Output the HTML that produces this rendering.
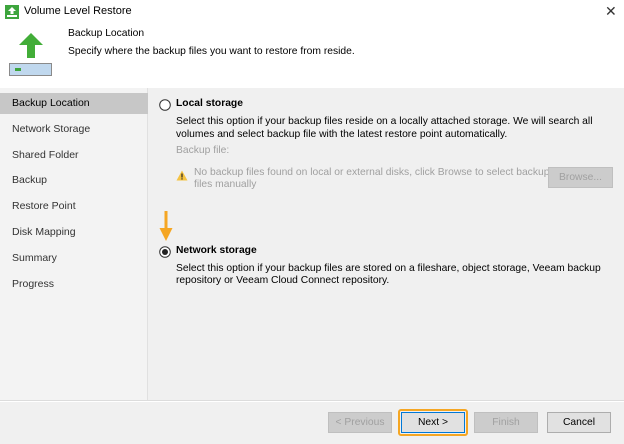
<!DOCTYPE html>
<html><head><style>
*{margin:0;padding:0;box-sizing:border-box}
body{width:624px;height:444px;position:relative;background:#f0f0f0;font-family:"Liberation Sans",sans-serif;font-size:10.3px;color:#000;overflow:hidden}
.a{position:absolute;white-space:nowrap}
.g{color:#a0a0a0}
.btn{position:absolute;height:21px;border:1px solid #adadad;background:#e1e1e1;text-align:center;line-height:19px;font-size:10.3px}
.dis{color:#a0a0a0;background:#cccccc;border-color:#bfbfbf}
.nav{position:absolute;left:12px;font-size:10.5px}
</style></head><body>
<div class="a" style="left:0;top:0;width:624px;height:88px;background:#fff"></div>
<svg class="a" style="left:5px;top:5px" width="14" height="14"><rect x="0" y="0" width="14" height="14" fill="#3da53d"/><path d="M7 2 L11 6 H8.5 V9 H5.5 V6 H3 Z" fill="#fff"/><rect x="2" y="10" width="10" height="2" fill="#fff"/></svg>
<div class="a" style="left:24px;top:5px;font-size:11px">Volume Level Restore</div>
<div class="a" style="left:605px;top:3px;font-size:14px;color:#333">✕</div>
<svg class="a" style="left:8px;top:32px" width="46" height="46"><path d="M23 1 L35 13 H27 V26 H19 V13 H11 Z" fill="#42ad38"/><rect x="1.5" y="31.5" width="42" height="12" fill="#c0d8ee" stroke="#8a8a8a"/><rect x="7" y="36" width="6" height="3" fill="#3da53d"/></svg>
<div class="a" style="left:68px;top:28px">Backup Location</div>
<div class="a" style="left:68px;top:46px">Specify where the backup files you want to restore from reside.</div>
<div class="a" style="left:0;top:88px;width:148px;height:312px;background:#f3f3f3;border-right:1px solid #e0e0e0"></div>
<div class="a" style="left:0;top:93px;width:148px;height:21px;background:#c7c7c7"></div>
<div class="nav" style="top:97px">Backup Location</div>
<div class="nav" style="top:123px;color:#333">Network Storage</div>
<div class="nav" style="top:149px;color:#333">Shared Folder</div>
<div class="nav" style="top:174px;color:#333">Backup</div>
<div class="nav" style="top:200px;color:#333">Restore Point</div>
<div class="nav" style="top:226px;color:#333">Disk Mapping</div>
<div class="nav" style="top:252px;color:#333">Summary</div>
<div class="nav" style="top:278px;color:#333">Progress</div>
<svg class="a" style="left:159px;top:99px" width="12" height="12"><circle cx="6" cy="6" r="5.3" fill="#fff" stroke="#333"/></svg>
<div class="a" style="left:176px;top:98px;font-weight:bold">Local storage</div>
<div class="a" style="left:176px;top:116px">Select this option if your backup files reside on a locally attached storage. We will search all</div>
<div class="a" style="left:176px;top:129px">volumes and select backup file with the latest restore point automatically.</div>
<div class="a g" style="left:176px;top:145px">Backup file:</div>
<svg class="a" style="left:176px;top:170px" width="12" height="11"><path d="M6 0.5 L11.5 10.5 H0.5 Z" fill="#f5c342"/><rect x="5.4" y="3.5" width="1.2" height="4" fill="#222"/><rect x="5.4" y="8.3" width="1.2" height="1.2" fill="#222"/></svg>
<div class="a g" style="left:194px;top:167px">No backup files found on local or external disks, click Browse to select backup</div>
<div class="a g" style="left:194px;top:179px">files manually</div>
<div class="btn dis" style="left:548px;top:167px;width:65px">Browse...</div>
<svg class="a" style="left:159px;top:211px" width="14" height="32"><rect x="5.5" y="0" width="3" height="20" fill="#f5a623"/><path d="M0.5 17 L13.5 17 L7 30 Z" fill="#f5a623"/></svg>
<svg class="a" style="left:159px;top:246px" width="12" height="12"><circle cx="6" cy="6" r="5.3" fill="#fff" stroke="#333"/><circle cx="6" cy="6" r="3" fill="#222"/></svg>
<div class="a" style="left:176px;top:245px;font-weight:bold">Network storage</div>
<div class="a" style="left:176px;top:263px">Select this option if your backup files are stored on a fileshare, object storage, Veeam backup</div>
<div class="a" style="left:176px;top:275px">repository or Veeam Cloud Connect repository.</div>
<div class="a" style="left:0;top:400px;width:624px;height:1px;background:#dcdcdc"></div>
<div class="a" style="left:0;top:401px;width:624px;height:1px;background:#fff"></div>
<div class="btn dis" style="left:328px;top:412px;width:64px">&lt; Previous</div>
<div class="a" style="left:398px;top:409px;width:70px;height:27px;border:2px solid #f5a623;border-radius:3px"></div>
<div class="btn" style="left:401px;top:412px;width:64px;border-color:#0078d7">Next &gt;</div>
<div class="btn dis" style="left:474px;top:412px;width:64px">Finish</div>
<div class="btn" style="left:547px;top:412px;width:64px">Cancel</div>
</body></html>
